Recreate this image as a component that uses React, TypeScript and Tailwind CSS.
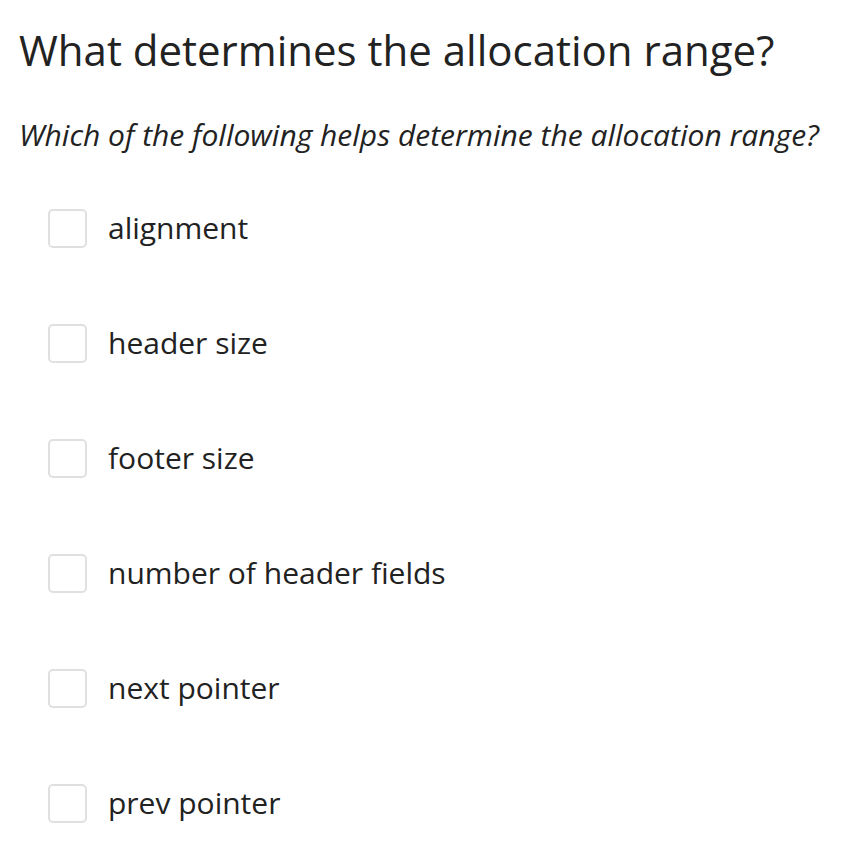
import React from "react";

const options = [
    "alignment",
    "header size",
    "footer size",
    "number of header fields",
    "next pointer",
    "prev pointer",
];

const App: React.FC = () => {
    return (
        <div className="w-[854px] h-[866px] bg-white text-[#222] font-['Open_Sans',sans-serif] pl-[19px] pt-[22px]">
            <h1 className="text-[42px] leading-[56px]">What determines the allocation range?</h1>
            <p className="mt-[37px] text-[30px] leading-[40px] italic">
                Which of the following helps determine the allocation range?
            </p>
            <div className="mt-[53px] pl-[29px] flex flex-col gap-[75px]">
                {options.map((opt) => (
                    <label key={opt} className="flex items-center gap-[21px] h-[40px]">
                        <span className="w-[39px] h-[39px] rounded-[5px] border-2 border-[#e0e0e0] bg-white" />
                        <span className="text-[30px] leading-[40px]">{opt}</span>
                    </label>
                ))}
            </div>
        </div>
    );
};

export default App;
